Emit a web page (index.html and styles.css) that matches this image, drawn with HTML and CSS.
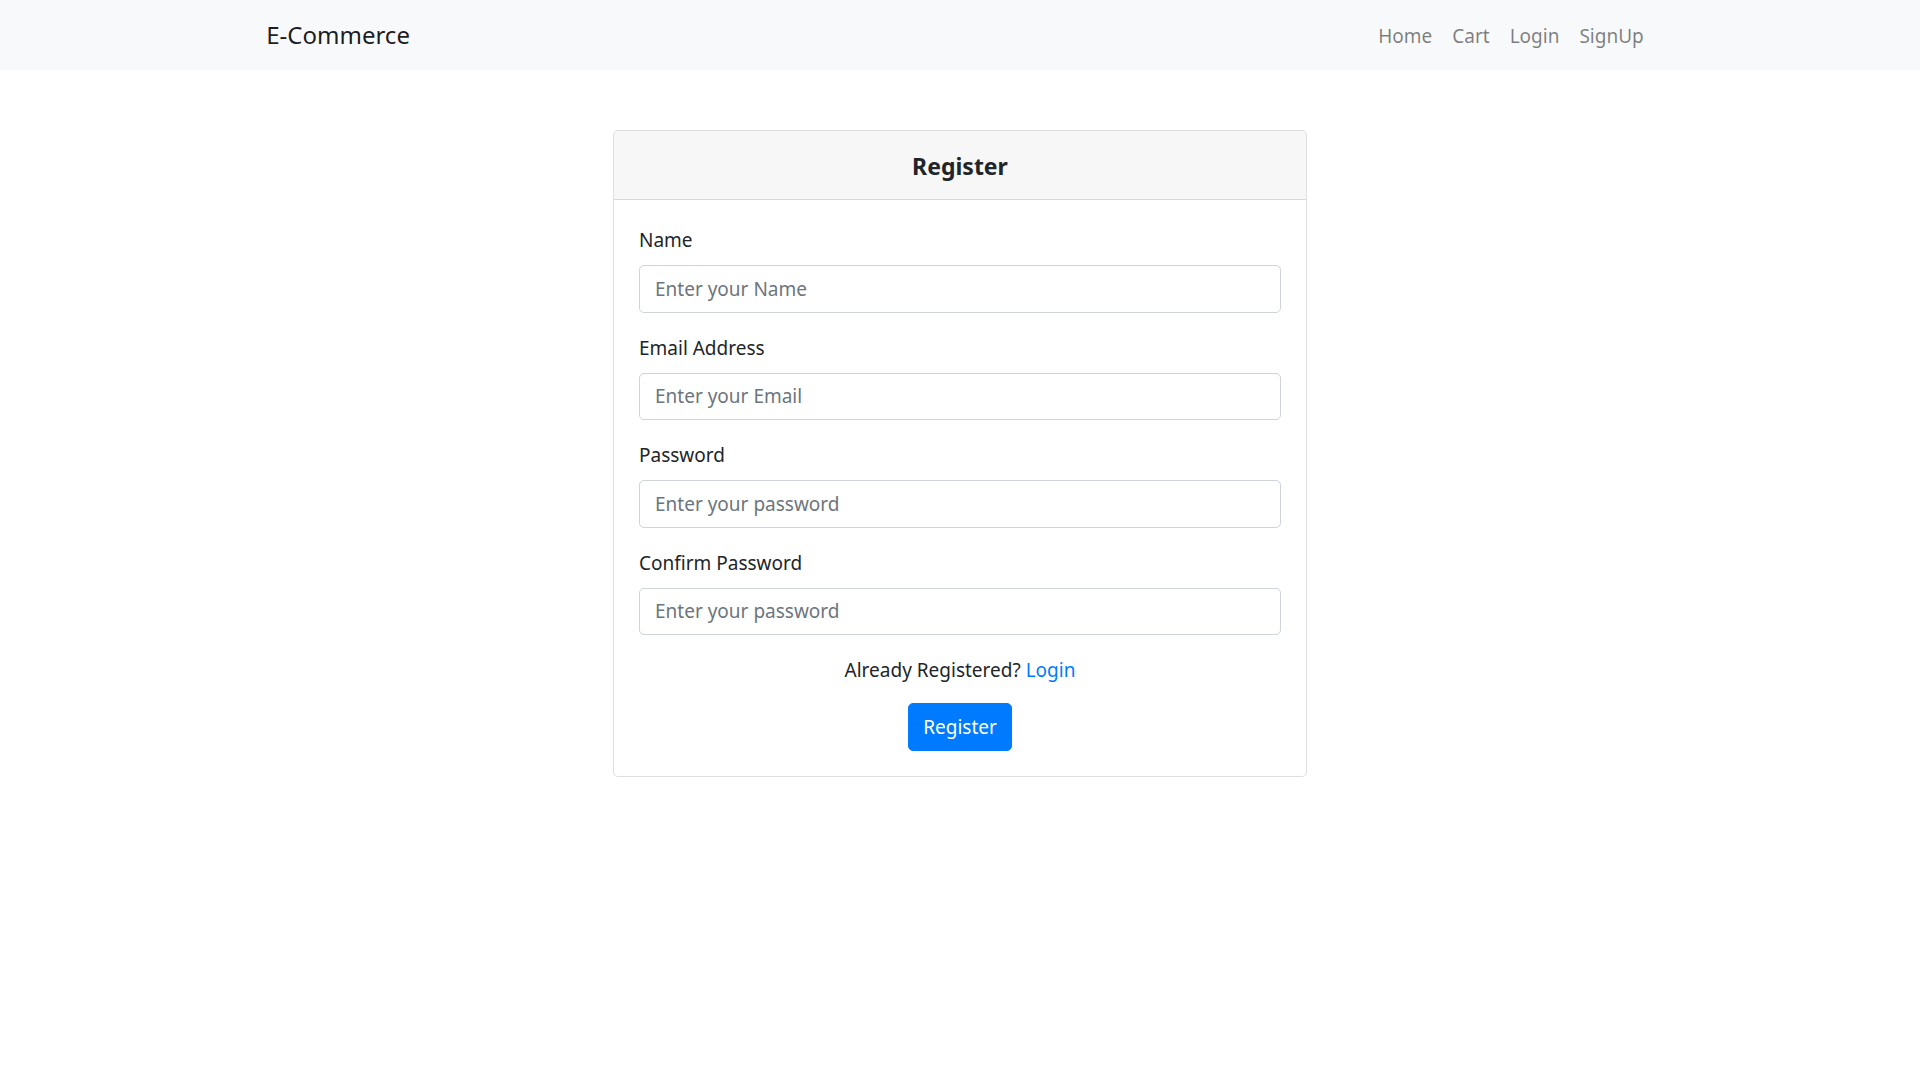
FILE: index.html
```html
<!DOCTYPE html>
<html lang="en">
<head>
<meta charset="utf-8">
<title>E-Commerce</title>
<link rel="stylesheet" href="styles.css">
</head>
<body>
<nav class="navbar">
  <div class="container nav-inner">
    <a class="brand" href="#">E-Commerce</a>
    <ul class="nav-links">
      <li><a href="#">Home</a></li>
      <li><a href="#">Cart</a></li>
      <li><a href="#">Login</a></li>
      <li><a href="#">SignUp</a></li>
    </ul>
  </div>
</nav>
<main class="main">
  <div class="card">
    <div class="card-header"><h4 class="card-title">Register</h4></div>
    <form class="card-body">
      <div class="group">
        <label class="label">Name</label>
        <input class="input" type="text" placeholder="Enter your Name">
      </div>
      <div class="group">
        <label class="label">Email Address</label>
        <input class="input" type="email" placeholder="Enter your Email">
      </div>
      <div class="group">
        <label class="label">Password</label>
        <input class="input" type="password" placeholder="Enter your password">
      </div>
      <div class="group">
        <label class="label">Confirm Password</label>
        <input class="input" type="password" placeholder="Enter your password">
      </div>
      <p class="already">Already Registered? <a href="#">Login</a></p>
      <div class="actions"><button class="btn" type="button">Register</button></div>
    </form>
  </div>
</main>
</body>
</html>
```
FILE: styles.css
```css
* { box-sizing: border-box; }
html, body { margin: 0; padding: 0; }
body {
  font-family: "Noto Sans", "Open Sans", sans-serif;
  font-size: 19px;
  line-height: 30px;
  color: #212529;
  background: #fff;
}
a { text-decoration: none; }
.navbar {
  background: #f8f9fa;
  height: 70px;
}
.container {
  width: 1425px;
  margin: 0 auto;
  padding: 0 18.75px;
}
.nav-inner {
  height: 70px;
  display: flex;
  align-items: center;
  justify-content: space-between;
}
.brand {
  font-size: 24px;
  line-height: 36px;
  padding-bottom: 1px;
  color: rgba(0,0,0,.9);
}
.nav-links {
  list-style: none;
  margin: 0;
  padding: 0;
  display: flex;
}
.nav-links a {
  display: block;
  padding: 10px 10px 9px;
  color: rgba(0,0,0,.5);
}
.main {
  padding-top: 60px;
  display: flex;
  justify-content: center;
}
.card {
  width: 694px;
  border: 1px solid rgba(0,0,0,.125);
  border-radius: 5px;
  background: #fff;
}
.card-header {
  background: rgba(0,0,0,.03);
  border-bottom: 1px solid rgba(0,0,0,.125);
  height: 69px;
  display: flex;
  align-items: center;
  justify-content: center;
  border-radius: 4px 4px 0 0;
}
.card-title {
  margin: 0;
  font-size: 23px;
  font-weight: 700;
  line-height: 36px;
  padding-top: 2px;
}
.card-body {
  padding: 25px 25px;
  display: flex;
  flex-direction: column;
}
.group {
  display: flex;
  flex-direction: column;
  margin-bottom: 20px;
}
.label {
  margin-bottom: 10px;
}
.input {
  height: 47.5px;
  padding: 7.5px 15px;
  font: inherit;
  color: #495057;
  border: 1px solid #ced4da;
  border-radius: 5px;
  background: #fff;
}
.input::placeholder { color: #6c757d; }
.already {
  margin: 0 0 18px;
  text-align: center;
}
.already a { color: #007bff; }
.actions {
  display: flex;
  justify-content: center;
}
.btn {
  height: 47.5px;
  width: 104px;
  font: inherit;
  color: #fff;
  background: #007bff;
  border: 1px solid #007bff;
  border-radius: 5px;
  padding: 0;
}
```
